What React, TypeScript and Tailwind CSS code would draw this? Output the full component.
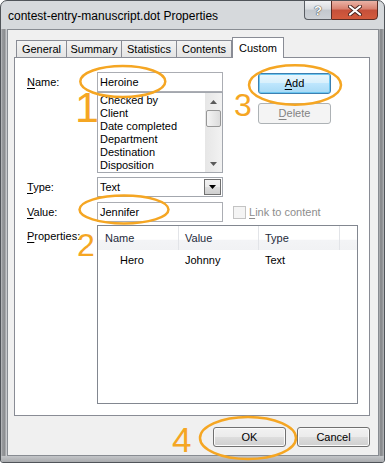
import React from "react";

const ORANGE = "#f5a623";

function U({ children }: { children: React.ReactNode }) {
  return <span className="underline underline-offset-[2px] decoration-[1px]">{children}</span>;
}

const listItems = ["Checked by", "Client", "Date completed", "Department", "Destination", "Disposition"];

function Tab({ label, w, active }: { label: string; w: string; active?: boolean }) {
  if (active) {
    return (
      <div
        className={`${w} h-[21px] -mb-px relative z-10 bg-white border border-b-0 border-[#898c95] text-center leading-[18px] pt-[1px]`}
      >
        {label}
      </div>
    );
  }
  return (
    <div
      className={`${w} h-[17px] border border-b-0 border-[#898c95] bg-[linear-gradient(180deg,#f3f3f3,#e4e4e4)] text-center leading-[16px] -mr-px`}
    >
      {label}
    </div>
  );
}

function ScrollArrow({ up }: { up?: boolean }) {
  return (
    <div className="h-[17px] flex items-center justify-center">
      <svg width="7" height="4" viewBox="0 0 7 4">
        {up ? <path d="M0 4 L3.5 0 L7 4 Z" fill="#5a5a5a" /> : <path d="M0 0 L3.5 4 L7 0 Z" fill="#5a5a5a" />}
      </svg>
    </div>
  );
}

function FrameStrip({ className }: { className: string }) {
  return <div className={className} />;
}

export default function App() {
  return (
    <div className="min-h-screen bg-white">
      <div className="relative w-[385px] h-[463px] overflow-hidden rounded-t-[7px] rounded-b-[3px] border border-[#505459] bg-[#d6d9dc] font-['Liberation_Sans',Arial,sans-serif] text-[11px] text-black flex flex-col">
        {/* title bar */}
        <div className="h-[28px] flex items-start shrink-0">
          <div className="pl-[7px] pt-[8px] text-[12px] leading-[14px]">contest-entry-manuscript.dot Properties</div>
          <div className="ml-auto mr-[6px] -mt-px flex">
            <div className="w-[27px] h-[20px] rounded-bl-[4px] border border-[#595d63] border-r-0 bg-[linear-gradient(180deg,#f1f2f4_0%,#d9dce0_45%,#c3c8ce_50%,#cdd1d6_100%)] flex items-center justify-center">
              <span className="text-[13px] font-bold leading-none text-white [text-shadow:0_0_1px_#2a2a2a,0_0_1px_#2a2a2a]">?</span>
            </div>
            <div className="w-[47px] h-[20px] rounded-br-[4px] border border-[#5a2c24] bg-[linear-gradient(180deg,#eab3a6_0%,#d8806e_45%,#c5503a_50%,#d35b3d_100%)] flex items-center justify-center">
              <svg width="14" height="11" viewBox="0 0 14 11">
                <path d="M2 1.5 L12 9.5 M12 1.5 L2 9.5" stroke="#4b2620" strokeWidth="4" strokeLinecap="round" />
                <path d="M2 1.5 L12 9.5 M12 1.5 L2 9.5" stroke="#ffffff" strokeWidth="2.2" strokeLinecap="round" />
              </svg>
            </div>
          </div>
        </div>

        {/* client row */}
        <div className="flex h-[427px] shrink-0">
          <FrameStrip className="w-[6px] bg-[linear-gradient(90deg,#c9cbce_0px,#9a9c9f_1px,#8a8c8f_4px,#c8cacd_5px)]" />
          <div className="w-[372px] border border-[#888c92] bg-[#f0f0f0] flex flex-col">
            {/* tabs */}
            <div className="mt-[7px] ml-[8px] h-[20px] flex items-end relative z-10">
              <Tab label="General" w="w-[51px]" />
              <Tab label="Summary" w="w-[56px]" />
              <Tab label="Statistics" w="w-[56px]" />
              <Tab label="Contents" w="w-[56px]" />
              <div className="w-px" />
              <Tab label="Custom" w="w-[52px]" active />
            </div>

            {/* tab panel */}
            <div className="ml-[6px] w-[356px] h-[359px] border border-[#898c95] bg-white pt-[14px] pl-[12px]">
              {/* name + list + buttons */}
              <div className="flex">
                <div className="flex flex-col">
                  <div className="flex items-center h-[20px]">
                    <div className="w-[70px]">
                      <U>N</U>ame:
                    </div>
                    <div className="w-[126px] h-[20px] border border-[#abadb3] pl-[2px] leading-[18px]">Heroine</div>
                  </div>
                  <div className="ml-[70px] w-[126px] h-[81px] border border-[#a3a7ae] flex">
                    <div className="flex-1 pl-[2px] pt-[1px] leading-[13px]">
                      {listItems.map((t) => (
                        <div key={t}>{t}</div>
                      ))}
                    </div>
                    <div className="w-[17px] bg-[linear-gradient(90deg,#e6e6e6,#f2f2f2)] flex flex-col">
                      <ScrollArrow up />
                      <div className="mx-[1px] h-[17px] rounded-[2px] border border-[#979797] bg-[linear-gradient(90deg,#f4f4f4,#dcdcdc)]" />
                      <div className="flex-1" />
                      <ScrollArrow />
                    </div>
                  </div>
                </div>
                <div className="ml-[35px] pt-[1px] flex flex-col">
                  <div className="w-[73px] h-[21px] rounded-[3px] border border-[#3c7fb1] shadow-[inset_0_0_0_1px_#6cc6f0] bg-[linear-gradient(180deg,#eaf6fd_0%,#d9f0fc_45%,#bee6fd_50%,#a7d9f5_100%)] flex items-center justify-center">
                    <span>
                      <U>A</U>dd
                    </span>
                  </div>
                  <div className="mt-[9px] w-[73px] h-[21px] rounded-[3px] border border-[#adb2b5] bg-[#f4f4f4] text-[#838383] flex items-center justify-center">
                    <span>
                      <U>D</U>elete
                    </span>
                  </div>
                </div>
              </div>

              {/* type */}
              <div className="mt-[4px] flex items-center h-[20px]">
                <div className="w-[70px]">
                  <U>T</U>ype:
                </div>
                <div className="w-[126px] h-[20px] border border-[#a3a7ae] flex items-center pl-[2px] pr-[1px]">
                  <span className="flex-1">Text</span>
                  <div className="w-[17px] h-[16px] border border-[#707070] bg-[linear-gradient(180deg,#f2f2f2_0%,#ebebeb_50%,#dddddd_51%,#cfcfcf_100%)] flex items-center justify-center">
                    <svg width="7" height="4" viewBox="0 0 7 4">
                      <path d="M0 0 L3.5 4 L7 0 Z" fill="#000" />
                    </svg>
                  </div>
                </div>
              </div>

              {/* value */}
              <div className="mt-[5px] flex items-center h-[20px]">
                <div className="w-[70px]">
                  <U>V</U>alue:
                </div>
                <div className="w-[126px] h-[20px] border border-[#abadb3] pl-[2px] leading-[18px]">Jennifer</div>
                <div className="ml-[10px] w-[13px] h-[13px] border border-[#c3c3c3] bg-[#f4f4f4]" />
                <div className="ml-[3px] text-[#8d8d8d]">
                  <U>L</U>ink to content
                </div>
              </div>

              {/* properties */}
              <div className="mt-[3px] flex">
                <div className="w-[70px] pt-[3px]">
                  <U>P</U>roperties:
                </div>
                <div className="w-[261px] h-[179px] border border-[#828790] flex flex-col">
                  <div className="h-[24px] flex bg-[linear-gradient(180deg,#ffffff_0%,#ffffff_55%,#f3f4f6_60%,#f1f2f4_100%)] text-[#1e2a3b]">
                    <div className="w-[81px] border-r border-[#e2e4e8] pl-[7px] flex items-center">Name</div>
                    <div className="w-[80px] border-r border-[#e2e4e8] pl-[6px] flex items-center">Value</div>
                    <div className="w-[81px] border-r border-[#e2e4e8] pl-[6px] flex items-center">Type</div>
                    <div className="flex-1" />
                  </div>
                  <div className="h-[20px] flex items-center">
                    <div className="w-[81px] pl-[22px]">Hero</div>
                    <div className="w-[80px] pl-[6px]">Johnny</div>
                    <div className="w-[81px] pl-[6px]">Text</div>
                  </div>
                </div>
              </div>
            </div>

            {/* dialog buttons */}
            <div className="mt-[11px] pr-[8px] flex justify-end gap-[11px]">
              <div className="w-[73px] h-[20px] rounded-[3px] border border-[#707070] shadow-[inset_0_0_0_1px_#fbfbfb] bg-[linear-gradient(180deg,#f2f2f2_0%,#ebebeb_50%,#dddddd_51%,#cfcfcf_100%)] flex items-center justify-center">
                OK
              </div>
              <div className="w-[73px] h-[20px] rounded-[3px] border border-[#707070] shadow-[inset_0_0_0_1px_#fbfbfb] bg-[linear-gradient(180deg,#f2f2f2_0%,#ebebeb_50%,#dddddd_51%,#cfcfcf_100%)] flex items-center justify-center">
                Cancel
              </div>
            </div>
          </div>
          <FrameStrip className="flex-1 bg-[linear-gradient(90deg,#c8cacd_0px,#8a8c8f_1px,#8a8c8f_3px,#b9bbbe_5px)]" />
        </div>
        <div className="flex-1 bg-[linear-gradient(180deg,#c4c6c9,#a9abae)]" />

        {/* annotations */}
        <svg className="absolute inset-0 pointer-events-none" width="385" height="463" viewBox="-1 -1 385 463">
          <g fill="none" stroke={ORANGE} strokeWidth="2.5">
            <ellipse cx="120.8" cy="79.5" rx="42.5" ry="15.5" />
            <ellipse cx="293" cy="83" rx="46" ry="19.7" />
            <ellipse cx="122" cy="207.5" rx="44.5" ry="14" />
            <ellipse cx="246" cy="436" rx="48" ry="21" />
          </g>
        </svg>
        <div className="absolute left-[74px] top-[85px] text-[43px] leading-none text-[#f5a623]">1</div>
        <div className="absolute left-[233px] top-[88px] text-[32px] leading-none text-[#f5a623]">3</div>
        <div className="absolute left-[76px] top-[228px] text-[32px] leading-none text-[#f5a623]">2</div>
        <div className="absolute left-[171px] top-[421px] text-[35px] leading-none text-[#f5a623]">4</div>
      </div>
    </div>
  );
}
